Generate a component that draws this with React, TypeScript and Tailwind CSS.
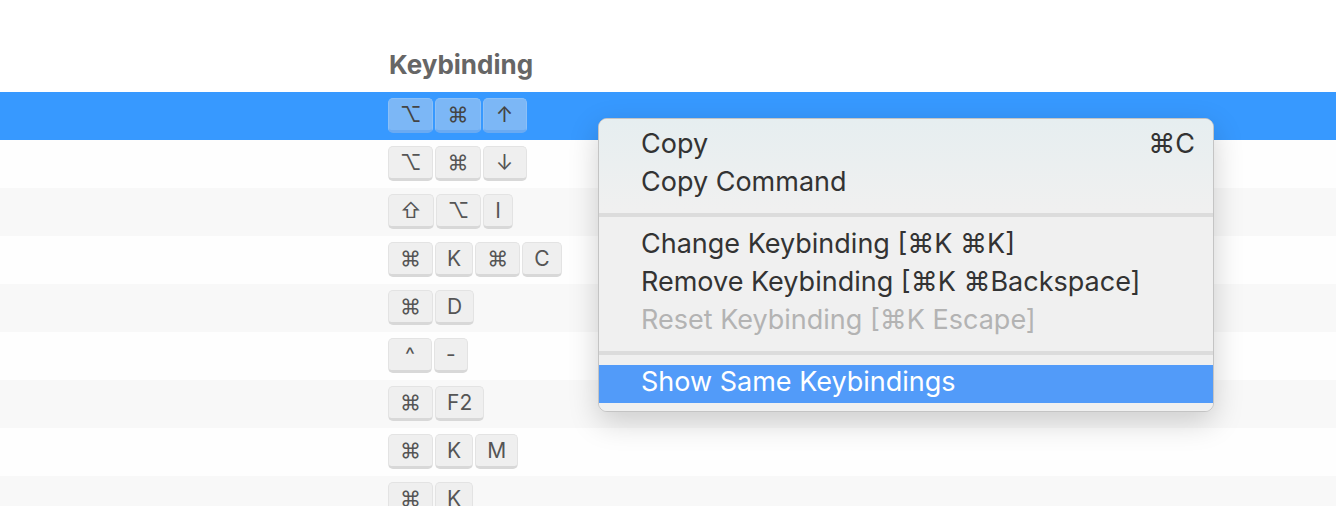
import React from "react";

const rows: string[][] = [
  ["⌥", "⌘", "↑"],
  ["⌥", "⌘", "↓"],
  ["⇧", "⌥", "I"],
  ["⌘", "K", "⌘", "C"],
  ["⌘", "D"],
  ["^", "-"],
  ["⌘", "F2"],
  ["⌘", "K", "M"],
  ["⌘", "K"],
];

const symbols = ["⌥", "⌘", "↑", "↓", "⇧", "^"];

const font = { fontFamily: '"Inter", "DejaVu Sans", sans-serif' };

function Key({ k, selected }: { k: string; selected: boolean }) {
  const isSym = symbols.includes(k);
  const base = "h-[35px] px-[11px] flex items-center justify-center rounded-[5px] border border-b-[3px] text-[21px] ";
  const width = isSym ? "min-w-[44px] " : "";
  const color = selected
    ? "border-[#8cc0f7] border-b-[#6aaaf2] bg-[#7cb7f6] text-[#444]"
    : "border-[#e3e3e3] border-b-[#d8d8d8] bg-[#efefef] text-[#555]";
  return <div className={base + width + color}>{k}</div>;
}

function Item({ children, className }: { children: React.ReactNode; className?: string }) {
  return <div className={"h-[38px] flex items-center pl-[42px] pb-[3px] " + (className ?? "")}>{children}</div>;
}

export default function App() {
  return (
    <div className="relative w-full h-[506px] overflow-hidden bg-white" style={font}>
      <div className="h-[92px] flex items-center pl-[389px] pt-[36px]">
        <span className="text-[26px] font-bold text-[#666]">Keybinding</span>
      </div>
      {rows.map((r, i) => {
        const selected = i === 0;
        const bg = selected ? "bg-[#3799ff]" : i % 2 === 1 ? "bg-[#fefefe]" : "bg-[#f8f8f8]";
        return (
          <div key={i} className={`h-[48px] flex items-start pt-[6px] pl-[388px] gap-[2px] ${bg}`}>
            {r.map((k, j) => (
              <Key key={j} k={k} selected={selected} />
            ))}
          </div>
        );
      })}

      <div className="absolute left-[598px] top-[118px] w-[616px] rounded-[9px] border border-[#c4c4c4] bg-[#f0f0f0] shadow-[0_10px_30px_rgba(0,0,0,0.18)] overflow-hidden text-[27px]">
        <div className="pt-[8px] pb-[8px] bg-[linear-gradient(to_bottom,#e6eef0_0px,#f0f0f0_90px)]">
          <Item className="justify-between pr-[18px] text-[#333]">
            <span>Copy</span>
            <span>⌘C</span>
          </Item>
          <Item className="text-[#333]">Copy Command</Item>
          <div className="h-[24px] flex items-center">
            <div className="w-full h-[4px] bg-[#dcdcdc]" />
          </div>
          <Item className="text-[#333]">Change Keybinding [⌘K ⌘K]</Item>
          <Item className="text-[#333]">Remove Keybinding [⌘K ⌘Backspace]</Item>
          <Item className="text-[#b3b3b3]">Reset Keybinding [⌘K Escape]</Item>
          <div className="h-[24px] flex items-center">
            <div className="w-full h-[4px] bg-[#dcdcdc]" />
          </div>
          <Item className="bg-[#529bf9] text-white">Show Same Keybindings</Item>
        </div>
      </div>
    </div>
  );
}
